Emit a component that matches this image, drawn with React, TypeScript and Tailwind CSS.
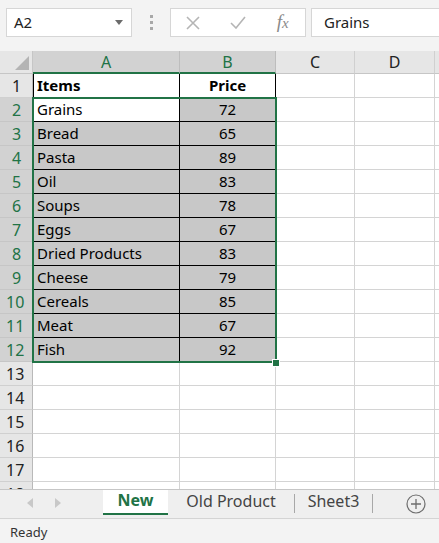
import React from 'react'

const rows: { item: string; price: number }[] = [
  { item: 'Grains', price: 72 },
  { item: 'Bread', price: 65 },
  { item: 'Pasta', price: 89 },
  { item: 'Oil', price: 83 },
  { item: 'Soups', price: 78 },
  { item: 'Eggs', price: 67 },
  { item: 'Dried Products', price: 83 },
  { item: 'Cheese', price: 79 },
  { item: 'Cereals', price: 85 },
  { item: 'Meat', price: 67 },
  { item: 'Fish', price: 92 },
]

const font = { fontFamily: '"Noto Sans", "Open Sans", sans-serif' }

function FormulaBar() {
  return (
    <div className="h-[51px] bg-[#f3f3f3] flex items-start pt-[8px] shrink-0">
      <div className="ml-[6px] w-[126px] h-[29px] bg-white border border-[#d6d6d6] flex items-center pl-[7px] pr-[8px]">
        <span className="text-[15px] text-[#222] flex-1">A2</span>
        <svg width="8" height="5" viewBox="0 0 8 5">
          <path d="M0 0 L8 0 L4 5 Z" fill="#6b6b6b" />
        </svg>
      </div>
      <div className="w-[38px] h-[29px] flex flex-col items-center justify-center gap-[3px]">
        <span className="w-[3px] h-[3px] bg-[#a8a8a8]" />
        <span className="w-[3px] h-[3px] bg-[#a8a8a8]" />
        <span className="w-[3px] h-[3px] bg-[#a8a8a8]" />
      </div>
      <div className="w-[136px] h-[29px] bg-white border border-[#d6d6d6] flex items-center">
        <div className="w-[45px] flex justify-center">
          <svg width="14" height="14" viewBox="0 0 14 14">
            <path d="M1 1 L13 13 M13 1 L1 13" stroke="#b5b5b5" strokeWidth="1.6" />
          </svg>
        </div>
        <div className="w-[45px] flex justify-center">
          <svg width="16" height="13" viewBox="0 0 16 13">
            <path d="M1 7 L6 12 L15 1" stroke="#b5b5b5" strokeWidth="1.6" fill="none" />
          </svg>
        </div>
        <div className="w-[45px] flex justify-center">
          <span className="text-[19px] italic text-[#8a8a8a]" style={{ fontFamily: '"Liberation Serif", serif' }}>
            f<span className="text-[15px]">x</span>
          </span>
        </div>
      </div>
      <div className="ml-[5px] flex-1 h-[29px] bg-white border border-[#d6d6d6] border-r-0 flex items-center pl-[12px]">
        <span className="text-[15px] text-[#222]">Grains</span>
      </div>
    </div>
  )
}

function RowHeader({ n, selected }: { n: number; selected?: boolean }) {
  return (
    <div
      className={`w-[33px] h-full shrink-0 border-r border-[#b9b9b9] border-b flex items-center pl-[6px] text-[16px] ${
        selected ? 'bg-[#d2d2d2] text-[#217346] border-b-[#c6c6c6]' : 'bg-[#e6e6e6] text-[#222] border-b-[#d0d0d0]'
      }`}
    >
      <span className={n < 10 ? 'pl-[6px]' : ''}>{n}</span>
    </div>
  )
}

function EmptyCells() {
  return (
    <>
      <div className="w-[79px] h-full shrink-0 border-r border-b border-[#d4d4d4]" />
      <div className="w-[80px] h-full shrink-0 border-r border-b border-[#d4d4d4]" />
      <div className="flex-1 h-full border-b border-[#d4d4d4]" />
    </>
  )
}

function Grid() {
  return (
    <div className="flex-1 relative overflow-hidden bg-white">
      <div className="h-[23px] flex bg-[#e6e6e6]">
        <div className="w-[33px] h-full shrink-0 border-r border-[#c6c6c6] border-b border-b-[#c6c6c6] relative">
          <svg className="absolute right-[3px] bottom-[3px]" width="14" height="14" viewBox="0 0 14 14">
            <path d="M14 0 L14 14 L0 14 Z" fill="#b4b4b4" />
          </svg>
        </div>
        <div className="w-[147px] h-full shrink-0 bg-[#d2d2d2] border-r border-[#bdbdbd] border-b-2 border-b-[#217346] flex items-center justify-center text-[16px] text-[#217346]">
          A
        </div>
        <div className="w-[96px] h-full shrink-0 bg-[#d2d2d2] border-r border-[#bdbdbd] border-b-2 border-b-[#217346] flex items-center justify-center text-[16px] text-[#217346]">
          B
        </div>
        <div className="w-[79px] h-full shrink-0 border-r border-[#d0d0d0] border-b border-b-[#c6c6c6] flex items-center justify-center text-[16px] text-[#222]">
          C
        </div>
        <div className="w-[80px] h-full shrink-0 border-r border-[#d0d0d0] border-b border-b-[#c6c6c6] flex items-center justify-center text-[16px] text-[#222]">
          D
        </div>
        <div className="flex-1 h-full border-b border-[#c6c6c6]" />
      </div>

      <div className="h-[24px] flex">
        <RowHeader n={1} />
        <div className="w-[147px] h-full shrink-0 border-l border-r border-b border-black flex items-center pl-[3px] text-[15px] font-bold text-black">
          Items
        </div>
        <div className="w-[96px] h-full shrink-0 border-r border-b border-black flex items-center justify-center text-[15px] font-bold text-black">
          Price
        </div>
        <EmptyCells />
      </div>

      {rows.map((r, i) => (
        <div key={r.item} className="h-[24px] flex">
          <RowHeader n={i + 2} selected />
          <div
            className={`w-[147px] h-full shrink-0 border-l border-r border-b border-black flex items-center pl-[3px] text-[15px] text-black ${
              i === 0 ? 'bg-white' : 'bg-[#c8c8c8]'
            }`}
          >
            {r.item}
          </div>
          <div className="w-[96px] h-full shrink-0 bg-[#c8c8c8] border-r border-b border-black flex items-center justify-center text-[15px] text-black">
            {r.price}
          </div>
          <EmptyCells />
        </div>
      ))}

      {[13, 14, 15, 16, 17, 18].map((n) => (
        <div key={n} className="h-[24px] flex">
          <RowHeader n={n} />
          <div className="w-[147px] h-full shrink-0 border-r border-b border-[#d4d4d4]" />
          <div className="w-[96px] h-full shrink-0 border-r border-b border-[#d4d4d4]" />
          <EmptyCells />
        </div>
      ))}

      <div className="absolute left-[32px] top-[46px] w-[245px] h-[266px] border-2 border-[#217346] pointer-events-none" />
      <div className="absolute left-[272px] top-[308px] w-[6px] h-[6px] bg-[#217346] border border-white box-content" />
    </div>
  )
}

function SheetTabs() {
  return (
    <div className="h-[29px] shrink-0 bg-[#efefef] border-t border-[#c6c6c6] flex items-start">
      <div className="w-[103px] h-[25px] flex items-center">
        <svg className="ml-[27px]" width="6" height="10" viewBox="0 0 6 10">
          <path d="M6 0 L0 5 L6 10 Z" fill="#c8c8c8" />
        </svg>
        <svg className="ml-[22px]" width="6" height="10" viewBox="0 0 6 10">
          <path d="M0 0 L6 5 L0 10 Z" fill="#c8c8c8" />
        </svg>
      </div>
      <div className="w-[65px] h-[25px] bg-white border-b-2 border-[#217346] flex items-center justify-center pb-[3px] text-[16px] font-bold text-[#217346]">
        New
      </div>
      <div className="w-[126px] h-[25px] flex items-center justify-center pb-[3px] text-[16px] text-[#444]">Old Product</div>
      <div className="w-px h-[19px] mt-[4px] bg-[#a8a8a8]" />
      <div className="w-[77px] h-[25px] flex items-center justify-center pb-[3px] text-[16px] text-[#444]">Sheet3</div>
      <div className="w-px h-[19px] mt-[4px] bg-[#a8a8a8]" />
      <div className="flex-1 h-[27px] flex items-center justify-center pl-[20px]">
        <svg width="20" height="20" viewBox="0 0 20 20">
          <circle cx="10" cy="10" r="9" fill="none" stroke="#6e6e6e" strokeWidth="1.2" />
          <path d="M10 5 L10 15 M5 10 L15 10" stroke="#6e6e6e" strokeWidth="1.3" />
        </svg>
      </div>
    </div>
  )
}

export default function App() {
  return (
    <div className="w-[439px] h-[543px] flex flex-col overflow-hidden bg-[#f3f3f3]" style={font}>
      <FormulaBar />
      <Grid />
      <SheetTabs />
      <div className="h-[25px] shrink-0 bg-[#f3f3f3] border-t border-[#d4d4d4] flex items-center pl-[10px] pt-[3px] text-[13px] text-[#333]">
        Ready
      </div>
    </div>
  )
}
